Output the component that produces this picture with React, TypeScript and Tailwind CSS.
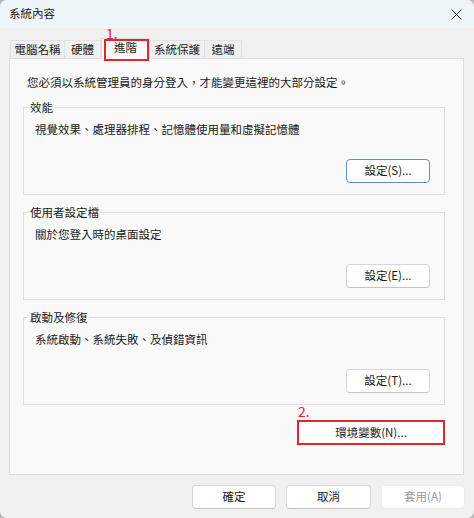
import React from "react";

const font = { fontFamily: '"Noto Sans CJK TC", "Noto Sans", sans-serif' };

function Btn({
  children,
  className = "",
}: {
  children: React.ReactNode;
  className?: string;
}) {
  return (
    <div
      className={
        "flex h-[24px] w-[84px] items-center justify-center rounded-[4px] border bg-white text-[11.5px] leading-none text-[#1a1a1a] " +
        className
      }
    >
      {children}
    </div>
  );
}

function Group({
  title,
  desc,
  button,
  focused = false,
}: {
  title: string;
  desc: string;
  button: string;
  focused?: boolean;
}) {
  return (
    <fieldset className="border border-[#dddddd] px-[11px] pb-[11px]">
      <legend className="ml-[-6px] px-[1px] text-[11.5px] leading-[14px] text-[#1a1a1a]">
        {title}
      </legend>
      <div className="pt-[7px] text-[11.5px] leading-[16px] text-[#1a1a1a]">{desc}</div>
      <div className="mt-[22px] flex justify-end pr-[3px]">
        <Btn
          className={
            focused
              ? "w-[83px] border-[#5f8fc8]"
              : "w-[83px] border-[#d6d6d6] border-b-[#c4c4c4]"
          }
        >
          {button}
        </Btn>
      </div>
    </fieldset>
  );
}

export default function App() {
  const tabs = [
    { label: "電腦名稱", w: "w-[55px]" },
    { label: "硬體", w: "w-[36px]" },
    { label: "進階", w: "w-[49px]", sel: true },
    { label: "系統保護", w: "w-[55px]" },
    { label: "遠端", w: "w-[37px]" },
  ];
  return (
    <div className="h-[518px] w-[474px] bg-[#b8b8b8]" style={font}>
      <div className="flex h-[518px] w-[474px] flex-col overflow-hidden rounded-[7px] bg-[#f0f0f0]">
        {/* title bar */}
        <div className="flex h-[28px] items-center justify-between bg-[#edf5f9] pl-[9px] pr-[12px]">
          <span className="text-[11.5px] leading-none text-[#1a1a1a]">系統內容</span>
          <svg width="11" height="11" viewBox="0 0 11 11">
            <path d="M0.5 0.5 L10.5 10.5 M10.5 0.5 L0.5 10.5" stroke="#222" strokeWidth="1" />
          </svg>
        </div>

        {/* tabs */}
        <div className="relative flex h-[30px] items-end pl-[10px]">
          {tabs.map((t) =>
            t.sel ? (
              <div
                key={t.label}
                className={
                  t.w +
                  " relative z-10 -mb-px flex h-[21px] items-center justify-center border-x border-t border-[#dcdcdc] bg-[#f9f9f9] pb-[2px] text-[11.5px] leading-none text-[#1a1a1a]"
                }
              >
                {t.label}
                <div className="pointer-events-none absolute left-[2px] top-[0px] h-[22px] w-[45px] border-2 border-[#e3262d]" />
                <div className="pointer-events-none absolute left-[4px] top-[-13px] text-[14px] leading-none text-[#e3262d]">
                  1.
                </div>
              </div>
            ) : (
              <div
                key={t.label}
                className={
                  t.w +
                  " flex h-[18px] items-center justify-center border-r border-t border-[#e2e2e2] bg-[#f0f0f0] text-[11.5px] leading-none text-[#1a1a1a] first:border-l"
                }
              >
                {t.label}
              </div>
            )
          )}
        </div>

        {/* panel */}
        <div className="ml-[9px] mr-[10px] flex flex-1 flex-col border border-[#dcdcdc] bg-[#f9f9f9] pl-[13px] pr-[18px] pt-[15px]">
          <div className="pl-[4px] text-[11.5px] leading-[16px] text-[#1a1a1a]">
            您必須以系統管理員的身分登入，才能變更這裡的大部分設定。
          </div>
          <div className="mt-[10px] flex flex-col gap-[10px]">
            <Group
              title="效能"
              desc="視覺效果、處理器排程、記憶體使用量和虛擬記憶體"
              button="設定(S)..."
              focused
            />
            <Group title="使用者設定檔" desc="關於您登入時的桌面設定" button="設定(E)..." />
            <Group
              title="啟動及修復"
              desc="系統啟動、系統失敗、及偵錯資訊"
              button="設定(T)..."
            />
          </div>
          <div className="mt-[15px] flex justify-end">
            <div className="relative">
              <div className="flex h-[25px] w-[148px] items-center justify-center border-2 border-[#e3262d] bg-white text-[11.5px] leading-none text-[#1a1a1a]">
                環境變數(N)...
              </div>
              <div className="pointer-events-none absolute left-[1px] top-[-16px] text-[14px] leading-none text-[#e3262d]">
                2.
              </div>
            </div>
          </div>
        </div>

        {/* footer */}
        <div className="flex h-[43px] items-start justify-end gap-[10px] pr-[9px] pt-[10px]">
          <Btn className="h-[23px] border-[#d6d6d6] border-b-[#c4c4c4]">確定</Btn>
          <Btn className="h-[23px] w-[85px] border-[#d6d6d6] border-b-[#c4c4c4]">取消</Btn>
          <Btn className="h-[23px] border-[#ececec] bg-[#f7f7f7] !text-[#9a9a9a]">套用(A)</Btn>
        </div>
      </div>
    </div>
  );
}
